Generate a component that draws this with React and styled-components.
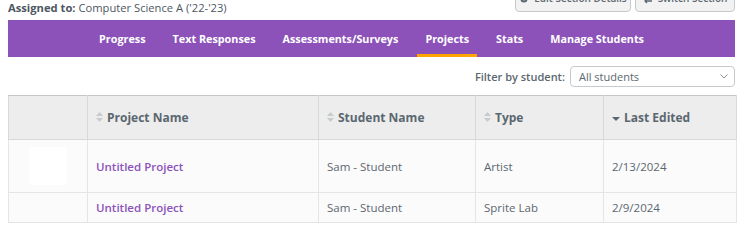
import React from 'react'
import styled, { createGlobalStyle } from 'styled-components'

const GlobalStyle = createGlobalStyle`
  body {
    margin: 0;
    background: #ffffff;
    font-family: "Open Sans", "Liberation Sans", sans-serif;
    color: #5b6770;
    overflow: hidden;
  }
`;

const Page = styled.div`
  width: 727px;
  padding: 0 11px 0 8px;
`;

const TopBar = styled.div`
  height: 20px;
  display: flex;
  justify-content: space-between;
  align-items: flex-start;
`;

const Assigned = styled.div`
  font-size: 11.2px;
  line-height: 16px;
  color: #4d575f;

  b {
    font-weight: 700;
  }
`;

const ButtonGroup = styled.div`
  display: flex;
  gap: 4px;
  margin-top: -18px;
`;

const HeaderButton = styled.button`
  height: 30px;
  width: ${(p) => p.$width}px;
  display: flex;
  align-items: flex-end;
  justify-content: center;
  gap: 5px;
  padding: 0 0 7px;
  border: 1px solid #c6cacd;
  border-radius: 4px;
  background: #f2f2f2;
  color: #5b6770;
  font-family: inherit;
  font-size: 10px;
  font-weight: 600;
  line-height: 12px;
  white-space: nowrap;
`;

const Nav = styled.nav`
  height: 37px;
  background: #8c52ba;
  display: flex;
  justify-content: center;
  gap: 11px;
`;

const NavItem = styled.a`
  display: flex;
  align-items: center;
  padding: 0 8px;
  color: #ffffff;
  font-size: 10.8px;
  font-weight: 700;
  text-decoration: none;
  box-sizing: border-box;
  border-bottom: 3px solid ${(p) => (p.$active ? '#ffa400' : 'transparent')};
  padding-top: 3px;
`;

const FilterRow = styled.div`
  margin-top: 9px;
  display: flex;
  justify-content: flex-end;
  align-items: center;
  gap: 5px;
`;

const FilterLabel = styled.label`
  font-size: 11px;
  font-weight: 600;
  color: #5b6770;
`;

const Select = styled.div`
  width: 165px;
  height: 21px;
  box-sizing: border-box;
  border: 1px solid #c6cacd;
  border-radius: 4px;
  display: flex;
  align-items: center;
  justify-content: space-between;
  padding: 0 6px 0 8px;
  font-size: 11px;
  color: #5b6770;
  background: #ffffff;
`;

const Table = styled.table`
  margin-top: 8px;
  width: 728px;
  border-collapse: collapse;
  table-layout: fixed;
  border: 1px solid #d4d4d4;
`;

const HeadCell = styled.th`
  height: 43px;
  background: #ededed;
  border: 1px solid #d9d9d9;
  border-top-color: #c6c6c6;
  text-align: left;
  padding: 0 8px;
  font-size: 12px;
  font-weight: 700;
  color: #5b6770;
  white-space: nowrap;
`;

const HeadInner = styled.span`
  display: inline-flex;
  align-items: center;
  gap: 4px;
`;

const Row = styled.tr`
  height: ${(p) => p.$height}px;
  background: #fbfbfb;
`;

const Cell = styled.td`
  border: 1px solid #e5e5e5;
  padding: 0 8px;
  font-size: 11.5px;
  color: #5b6770;
  white-space: nowrap;
`;

const ThumbCell = styled(Cell)`
  padding: 0 0 0 20px;
`;

const Thumb = styled.div`
  width: 38px;
  height: 38px;
  background: #ffffff;
`;

const ProjectLink = styled.a`
  color: #8c52ba;
  font-weight: 600;
  text-decoration: none;
`;

const SortBoth = () => (
  <svg width="7" height="10" viewBox="0 0 7 10">
    <path d="M3.5 0 L7 4 H0 Z" fill="#c8cbce" />
    <path d="M3.5 10 L7 6 H0 Z" fill="#c8cbce" />
  </svg>
)

const SortDown = () => (
  <svg width="8" height="10" viewBox="0 0 8 10">
    <path d="M0 5 H8 L4 9 Z" fill="#5b6770" />
  </svg>
)

const Gear = () => (
  <svg width="10" height="10" viewBox="0 0 10 10">
    <circle cx="5" cy="5" r="3.5" fill="#5b6770" />
    <circle cx="5" cy="5" r="1.4" fill="#f2f2f2" />
  </svg>
)

const Swap = () => (
  <svg width="10" height="10" viewBox="0 0 10 10">
    <path d="M1 3 H8 M6 1 L8 3 L6 5 M9 7 H2 M4 5 L2 7 L4 9" stroke="#5b6770" strokeWidth="1.3" fill="none" />
  </svg>
)

const Chevron = () => (
  <svg width="8" height="5" viewBox="0 0 8 5">
    <path d="M0.5 0.5 L4 4 L7.5 0.5" stroke="#8a9196" strokeWidth="1" fill="none" />
  </svg>
)

const tabs = ['Progress', 'Text Responses', 'Assessments/Surveys', 'Projects', 'Stats', 'Manage Students']

const projects = [
  { name: 'Untitled Project', student: 'Sam - Student', type: 'Artist', edited: '2/13/2024', thumb: true, height: 53 },
  { name: 'Untitled Project', student: 'Sam - Student', type: 'Sprite Lab', edited: '2/9/2024', thumb: false, height: 30 },
]

const App = () => {
  return (
    <Page>
      <GlobalStyle />
      <TopBar>
        <Assigned>
          <b>Assigned to:</b> Computer Science A ('22-'23)
        </Assigned>
        <ButtonGroup>
          <HeaderButton $width={116}><Gear />Edit Section Details</HeaderButton>
          <HeaderButton $width={100}><Swap />Switch Section</HeaderButton>
        </ButtonGroup>
      </TopBar>
      <Nav>
        {tabs.map((t) => (
          <NavItem key={t} $active={t === 'Projects'}>{t}</NavItem>
        ))}
      </Nav>
      <FilterRow>
        <FilterLabel>Filter by student:</FilterLabel>
        <Select>
          All students
          <Chevron />
        </Select>
      </FilterRow>
      <Table>
        <colgroup>
          <col style={{ width: 79 }} />
          <col style={{ width: 231 }} />
          <col style={{ width: 157 }} />
          <col style={{ width: 128 }} />
          <col style={{ width: 133 }} />
        </colgroup>
        <thead>
          <tr>
            <HeadCell />
            <HeadCell><HeadInner><SortBoth />Project Name</HeadInner></HeadCell>
            <HeadCell><HeadInner><SortBoth />Student Name</HeadInner></HeadCell>
            <HeadCell><HeadInner><SortBoth />Type</HeadInner></HeadCell>
            <HeadCell><HeadInner><SortDown />Last Edited</HeadInner></HeadCell>
          </tr>
        </thead>
        <tbody>
          {projects.map((p, i) => (
            <Row key={i} $height={p.height}>
              <ThumbCell>{p.thumb && <Thumb />}</ThumbCell>
              <Cell><ProjectLink>{p.name}</ProjectLink></Cell>
              <Cell>{p.student}</Cell>
              <Cell>{p.type}</Cell>
              <Cell>{p.edited}</Cell>
            </Row>
          ))}
        </tbody>
      </Table>
    </Page>
  )
}

export default App
